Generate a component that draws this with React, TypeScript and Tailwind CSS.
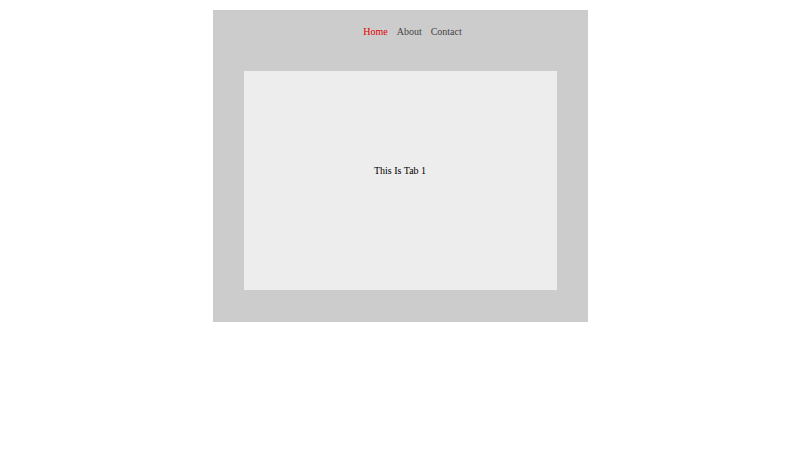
export default function App() {
  const links = ["Home", "About", "Contact"];
  return (
    <div className="min-h-[450px] bg-white pt-[10px] font-['Liberation_Serif',serif] text-[10px] leading-[12px]">
      <div className="mx-auto h-[312px] w-[375px] bg-[#cccccc] pt-[16px]">
        <ul className="flex justify-center gap-[9px] pl-[25px]">
          {links.map((label, i) => (
            <li key={label} className={i === 0 ? "text-[#e00000]" : "text-[#444444]"}>
              {label}
            </li>
          ))}
        </ul>
        <div className="mx-auto mt-[33px] h-[219px] w-[313px] bg-[#ededed] pt-[94px] text-center text-black">
          This Is Tab 1
        </div>
      </div>
    </div>
  );
}
